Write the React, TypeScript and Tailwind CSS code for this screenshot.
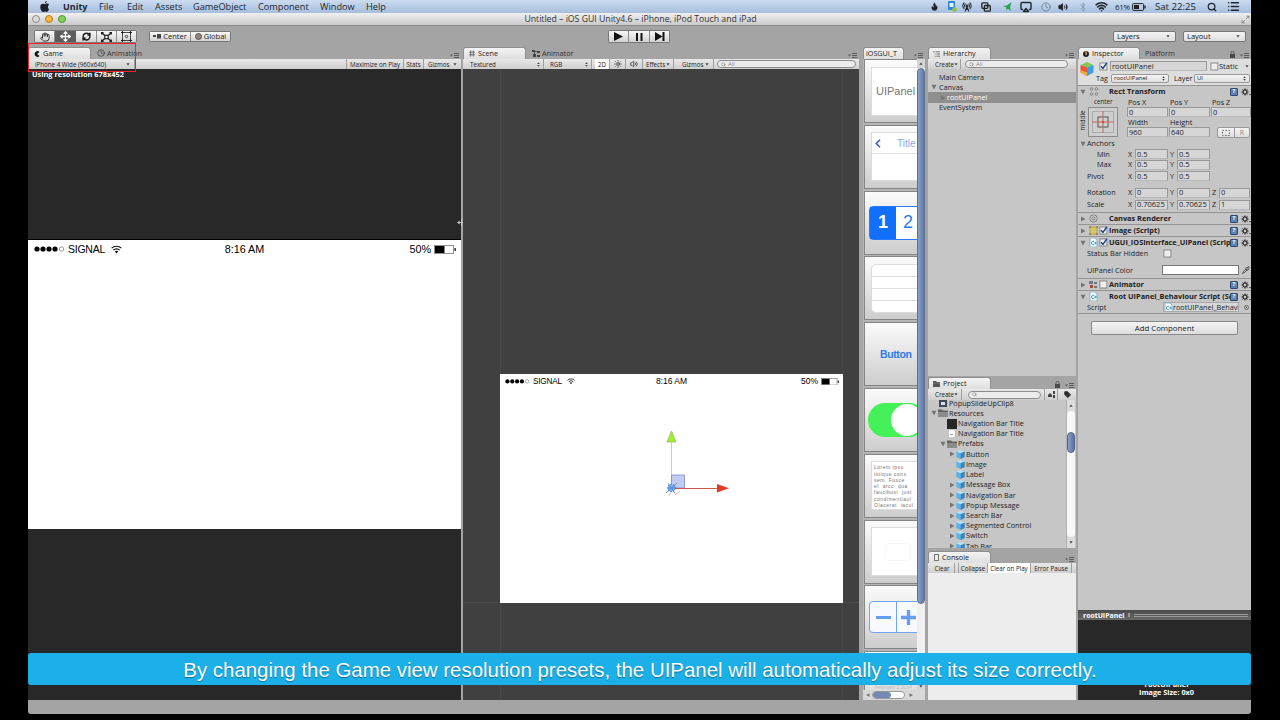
import type { ReactNode } from 'react'
import clsx from 'clsx'
import {
  Airplay,
  Bluetooth,
  Clock,
  Flame,
  Hand,
  List,
  Maximize2,
  Move,
  Pipette,
  RadioTower,
  RefreshCw,
  Search,
  Sun,
  Tag,
  Volume2,
  Wifi,
} from 'lucide-react'

const tabBg = 'bg-linear-to-b from-[#f4f4f4] to-[#dedede]'
const barBg = 'bg-linear-to-b from-[#e8e8e8] to-[#cfcfcf]'

function Tab({ icon, label, className }: { icon?: ReactNode; label: string; className?: string }) {
  return (
    <div className={clsx('flex h-[12px] items-center gap-[3px] rounded-t-[3px] border-x border-t border-[#8f8f8f] whitespace-nowrap', tabBg, className)}>
      {icon}
      <span>{label}</span>
    </div>
  )
}

function PaneMenu({ locked }: { locked?: boolean }) {
  return (
    <div className="mb-[1px] ml-auto flex items-end gap-[5px] pr-[2px]">
      {locked && (
        <svg width="5" height="7" viewBox="0 0 5 7">
          <path d="M0 3h5v4H0z" fill="#4a4a4a" />
          <path d="M1 3.200V1.800a1.500 1.500 0 0 1 3 0v1.400" fill="none" stroke="#4a4a4a" strokeWidth=".8" />
        </svg>
      )}
      <svg width="9" height="5" viewBox="0 0 9 5" fill="#5c5c5c">
        <path d="M0 1.500h3L1.500 3.500zM4 0h5v1H4zM4 2h5v1H4zM4 4h5v1H4z" />
      </svg>
    </div>
  )
}

function Down({ className }: { className?: string }) {
  return (
    <svg width="4" height="3" viewBox="0 0 4 3" className={clsx('shrink-0', className)} fill="#444">
      <path d="M.4.300h3.200L2 2.500z" />
    </svg>
  )
}

function UpDown() {
  return (
    <svg width="3" height="5" viewBox="0 0 4 6" className="shrink-0" fill="#444">
      <path d="M.3 2.300h3.400L2 0zM.3 3.700h3.400L2 6z" />
    </svg>
  )
}

function Fold({ open, className }: { open?: boolean; className?: string }) {
  return (
    <svg width="6" height="6" viewBox="0 0 6 6" className={clsx('shrink-0', className)} fill="#757575">
      <path d={open ? 'M.5.7h5L3 5.500z' : 'M1 .5v5L5.500 3z'} />
    </svg>
  )
}

function SearchBox({ className, hint }: { className?: string; hint?: string }) {
  return (
    <div className={clsx('flex h-[8px] items-center gap-[2px] rounded-full border border-[#8c8c8c] bg-[#ececec] px-[3px] text-[6px] text-[#8a8a8a]', className)}>
      <Search className="size-[5px]" strokeWidth={3} />
      {hint}
    </div>
  )
}

function CubeIcon() {
  return (
    <svg width="9" height="9" viewBox="0 0 9 9" className="shrink-0">
      <path d="M4.500 0 8.700 1.600 4.500 3.200.3 1.600z" fill="#b4e2fa" />
      <path d="M.3 1.600 4.500 3.200V9L.3 7z" fill="#5ab4ea" />
      <path d="M8.700 1.600 4.500 3.200V9l4.200-2z" fill="#2f86c8" />
    </svg>
  )
}

function FolderIcon() {
  return (
    <svg width="10" height="8" viewBox="0 0 10 8" className="shrink-0">
      <path d="M0 .5h4l1 1h5V8H0z" fill="#626262" />
      <path d="M0 3h10v5H0z" fill="#8b8b8b" />
    </svg>
  )
}

function ScriptIcon() {
  return (
    <svg width="9" height="9" viewBox="0 0 9 9" className="shrink-0">
      <path d="M1 0h5l2 2v7H1z" fill="#f4f9fc" stroke="#6ba3c2" strokeWidth=".7" />
      <path d="M5 3.500a1.700 1.700 0 1 0 0 3M5.500 4.300h2M5.500 5.700h2" fill="none" stroke="#3193c4" />
    </svg>
  )
}

function Check({ on }: { on?: boolean }) {
  return (
    <svg width="9" height="9" viewBox="0 0 9 9" className="shrink-0">
      <rect x=".9" y="1" width="7" height="7" fill="#eee" stroke="#777" strokeWidth=".8" />
      {on && <path d="M2 4.200 4 6.400 7.800.8" fill="none" stroke="#1c3f86" strokeWidth="1.500" />}
    </svg>
  )
}

/* ---------- mac menu bar and window toolbar ---------- */

const menus = [
  { label: 'File', width: 'w-[28px]' },
  { label: 'Edit', width: 'w-[28px]' },
  { label: 'Assets', width: 'w-[38px]' },
  { label: 'GameObject', width: 'w-[65px]' },
  { label: 'Component', width: 'w-[62px]' },
  { label: 'Window', width: 'w-[46px]' },
  { label: 'Help', width: 'w-[24px]' },
]

function MenuBar() {
  return (
    <div className="flex h-[13px] items-center bg-linear-to-b from-[#ccdcf0] to-[#a6bedd] text-[9.200px] leading-[12px] text-[#20262e]">
      <svg width="10" height="11" viewBox="0 0 10 11" className="ml-[12px]" fill="#1d2229">
        <path d="M6.800 0c.1 1.200-.9 2.200-2 2.200C4.700 1.100 5.700.2 6.800 0zM9 8.200C8.300 9.800 7.500 11 6.600 11c-.7 0-.9-.4-1.700-.4s-1 .4-1.600.4C2 11 .3 8.200.3 5.900c0-2 1.300-3.200 2.600-3.200.8 0 1.500.5 2 .5s1.300-.6 2.300-.6c.8 0 1.500.4 1.900 1.100C7.400 4.700 7.600 7.300 9 8.200z" />
      </svg>
      <span className="ml-[13px] w-[36px] text-[9px] font-bold">Unity</span>
      {menus.map((m) => (
        <span key={m.label} className={clsx('shrink-0 whitespace-nowrap', m.width)}>
          {m.label}
        </span>
      ))}
      <div className="mr-[11px] ml-auto flex items-center">
        <Flame className="mr-[8px] size-[9px]" fill="#222" />
        <svg width="10" height="11" viewBox="0 0 10 11" className="mr-[5px]">
          <rect x="1" y="0" width="7" height="9" rx="1" fill="#2d86d9" />
          <rect x="2.500" y="2" width="4" height="4" fill="#e8f2fb" />
          <circle cx="7.500" cy="8.500" r="2.300" fill="#8cc63f" />
        </svg>
        <RadioTower className="mr-[9px] size-[10px]" strokeWidth={2.500} />
        <svg width="10" height="10" viewBox="0 0 10 10" className="mr-[12px]" fill="none" stroke="#222" strokeWidth="1.300">
          <rect x=".8" y=".8" width="6" height="5.500" rx="1" />
          <rect x="3.300" y="3.500" width="6" height="5.700" rx="1" />
        </svg>
        <svg width="9" height="10" viewBox="0 0 9 10" className="mr-[8px]">
          <path d="M8.500 0 7 5.500 8 9 5.500 7 3 8l.5-2.500L0 4l4-.5z" fill="#2aa152" />
        </svg>
        <Airplay className="mr-[9px] size-[12px]" strokeWidth={2.800} />
        <Clock className="mr-[7px] size-[10px] text-[#6d7989]" strokeWidth={2} />
        <Volume2 className="mr-[10px] size-[10px]" fill="#222" />
        <Bluetooth className="mr-[7px] size-[10px] text-[#8896a9]" />
        <Wifi className="mr-[7px] size-[13px]" strokeWidth={3} />
        <span className="w-[17px] text-[8px] tracking-[-0.300px]">61%</span>
        <svg width="14" height="8" viewBox="0 0 14 8" className="mr-[9px]">
          <rect x=".6" y=".6" width="11" height="6.800" rx="1" fill="none" stroke="#222" />
          <path d="M2 2h5v4H2zM12.300 2.500h1.300v3h-1.300z" fill="#222" />
        </svg>
        <span className="mr-[11px] w-[41px] text-[9.600px] whitespace-nowrap">Sat 22:25</span>
        <Search className="mr-[10px] size-[10px]" strokeWidth={3} />
        <List className="size-[13px]" strokeWidth={3} />
      </div>
    </div>
  )
}

function TitleBar() {
  return (
    <div className="flex h-[13px] items-center border-b border-[#8b8b8b] bg-linear-to-b from-[#f0f0f0] to-[#cacaca] pr-[1px] pl-[4px]">
      <div className="flex w-[60px] gap-[5px]">
        <div className="size-[8px] rounded-full border border-[#8d8d8d] bg-[#dadada]" />
        <div className="size-[8px] rounded-full border border-[#b07b2a] bg-[#f5b83d]" />
        <div className="size-[8px] rounded-full border border-[#4f9436] bg-[#82d059]" />
      </div>
      <span className="flex-1 pt-[1px] text-center text-[8.700px] text-[#333]">Untitled – iOS GUI Unity4.6 – iPhone, iPod Touch and iPad</span>
      <div className="flex w-[61px] justify-end">
        <Maximize2 className="size-[9px] text-[#777]" />
      </div>
    </div>
  )
}

const btn = 'flex items-center justify-center border-r border-[#8b8b8b] bg-linear-to-b from-[#f8f8f8] to-[#d2d2d2] last:border-r-0'

function Toolbar() {
  return (
    <div className="flex h-[21px] items-start bg-[#a4a4a4] pt-[4px] pl-[6px]">
      <div className="flex h-[13px] w-[103px] rounded-[2px] border border-[#777]">
        <div className={clsx(btn, 'w-[20px]')}>
          <Hand className="size-[10px]" />
        </div>
        <div className="flex w-[21px] items-center justify-center bg-[#5c5c5c] text-white">
          <Move className="size-[11px]" strokeWidth={3} />
        </div>
        <div className={clsx(btn, 'w-[21px]')}>
          <RefreshCw className="size-[9px]" strokeWidth={4} />
        </div>
        <div className={clsx(btn, 'w-[20px]')}>
          <svg width="11" height="10" viewBox="0 0 11 10" stroke="#222" fill="none" strokeWidth="1.200">
            <path d="M.6 2.500V.6h2M8.400.6h2v1.900M.6 7.500v1.900h2M8.400 9.400h2V7.500M1 1l9 8M10 1 1 9" />
            <rect x="3.800" y="3.300" width="3.400" height="3.400" fill="#eee" />
          </svg>
        </div>
        <div className={clsx(btn, 'flex-1')}>
          <svg width="11" height="11" viewBox="0 0 11 11" stroke="#222" fill="none">
            <rect x="1.500" y="1.500" width="8" height="8" strokeWidth=".8" />
            <circle cx="5.500" cy="5.500" r="1.200" strokeWidth=".8" />
            <path d="M0 1.500h3M1.500 0v3M8 1.500h3M9.500 0v3M0 9.500h3M1.500 8v3M8 9.500h3M9.500 8v3" />
          </svg>
        </div>
      </div>
      <div className="mt-[1px] ml-[12px] flex h-[11px] w-[82px] rounded-[2px] border border-[#777] text-[7.500px] leading-[9px]">
        <div className={clsx(btn, 'w-[41px] gap-[2px]')}>
          <svg width="8" height="5" viewBox="0 0 8 5" fill="#444">
            <path d="M0 1h3v2H0zM4 0h4v4.500H4z" />
          </svg>
          Center
        </div>
        <div className={clsx(btn, 'flex-1 gap-[2px]')}>
          <div className="size-[7px] rounded-full border border-[#555] bg-[#97807d]" />
          Global
        </div>
      </div>
      <div className="ml-[377px] flex h-[13px] w-[62px] rounded-[2px] border border-[#777]">
        <div className={clsx(btn, 'w-[20px]')}>
          <svg width="9" height="9" viewBox="0 0 9 9"><path d="M0 0v9l9-4.500z" fill="#111" /></svg>
        </div>
        <div className={clsx(btn, 'w-[21px]')}>
          <svg width="7" height="8" viewBox="0 0 7 8"><path d="M0 0h2v8H0zM4.500 0h2v8h-2z" fill="#111" /></svg>
        </div>
        <div className={clsx(btn, 'flex-1')}>
          <svg width="10" height="9" viewBox="0 0 10 9"><path d="M0 0v9l7.500-4.500zM7.500 0h2v9h-2z" fill="#111" /></svg>
        </div>
      </div>
      <div className="mt-[1px] mr-[5px] ml-auto flex gap-[7px] text-[7.500px]">
        {['Layers', 'Layout'].map((label) => (
          <div key={label} className={clsx('flex h-[11px] w-[63px] items-center justify-between rounded-[2px] border border-[#777] pr-[5px] pl-[3px]', tabBg)}>
            {label}
            <Down />
          </div>
        ))}
      </div>
    </div>
  )
}

/* ---------- game and scene ---------- */

function PhoneStatus({ small }: { small?: boolean }) {
  return (
    <div
      className={clsx(
        "grid grid-cols-3 items-center font-['Liberation_Sans',sans-serif] text-black",
        small ? 'h-[15px] pr-[4px] pl-[5px] text-[8.500px]' : 'h-[18px] pr-[5px] pl-[6px] text-[10.800px]',
      )}
    >
      <div className="flex items-center gap-[3px]">
        <svg width={small ? 25 : 31} viewBox="0 0 31 6">
          {[3, 9, 15, 21].map((cx) => (
            <circle key={cx} cx={cx} cy="3" r="2.600" />
          ))}
          <circle cx="27.500" cy="3" r="2.200" fill="none" stroke="#555" strokeWidth=".6" />
        </svg>
        <span className={small ? 'w-[29px] text-[8.200px] tracking-[-0.200px]' : 'w-[38px] text-[10.500px] tracking-[-0.250px]'}>SIGNAL</span>
        <svg width={small ? 8 : 11} viewBox="0 0 11 9" fill="none" stroke="#111" strokeWidth="1.100" className="ml-[2px]">
          <path d="M.6 3.200a7 7 0 0 1 9.800 0M2.300 5.200a4.500 4.500 0 0 1 6.400 0" />
          <path d="M3.800 6.600a2.600 2.600 0 0 1 3.400 0L5.500 8.500z" fill="#111" stroke="none" />
        </svg>
      </div>
      <span className="pr-[1px] text-center">8:16 AM</span>
      <div className="flex items-center justify-end gap-[3px]">
        50%
        <svg width={small ? 18 : 22} viewBox="0 0 22 9">
          <rect x=".4" y=".4" width="19.200" height="8.200" fill="#fff" stroke="#777" strokeWidth=".8" />
          <path d="M1 1h9.500v7H1zM20.500 3h1.200v3h-1.200z" fill="#000" />
        </svg>
      </div>
    </div>
  )
}

const cell = 'flex h-full items-center border-r border-[#a0a0a0]'

function GamePane() {
  return (
    <section className="flex w-[433px] flex-col">
      <div className="flex h-[12px] items-end">
        <Tab
          className="w-[63px] pl-[5px]"
          label="Game"
          icon={<svg width="6" height="6" viewBox="0 0 6 6"><path d="M5.500 1A2.800 2.800 0 1 0 5.500 5L3 3z" fill="#111" /></svg>}
        />
        <div className="flex h-[12px] items-center gap-[2px] pl-[6px] text-[#333]">
          <Clock className="size-[8px]" />
          Animation
        </div>
        <PaneMenu />
      </div>
      <div className={clsx('flex h-[10px] items-center text-[6.200px]', barBg)}>
        <div className={clsx(cell, 'w-[107px] justify-between pr-[4px] pl-[7px]')}>
          iPhone 4 Wide (960x640)
          <Down />
        </div>
        <div className="flex-1" />
        <div className={clsx(cell, 'w-[58px] justify-center border-l')}>Maximize on Play</div>
        <div className={clsx(cell, 'w-[20px] justify-center')}>Stats</div>
        <div className="flex w-[37px] items-center justify-between px-[4px]">
          Gizmos
          <Down />
        </div>
      </div>
      <div className="h-[171px] overflow-hidden border-b border-black bg-[#282828] pt-[1px] pl-[4px] text-[7.400px] leading-[9px] font-bold text-white">
        Using resolution 678x452
      </div>
      <div className="h-[289px] bg-white">
        <PhoneStatus />
      </div>
      <div className="flex-1 bg-[#282828]" />
    </section>
  )
}

function MoveGizmo() {
  return (
    <svg width="64" height="67" viewBox="0 0 64 67">
      <path d="M5.500 57V10" stroke="#b5e588" />
      <path d="M5.500 0 10 11H1z" fill="#a4ea3a" stroke="#7fb92e" strokeWidth=".6" />
      <rect x="5.500" y="44" width="13" height="13" fill="#c3cbf3" stroke="#7d8bd8" strokeWidth=".8" />
      <path d="M5.500 57.500h47" stroke="#c85a50" />
      <path d="M63 57.300 51 53v8.600z" fill="#e33a25" />
      <circle cx="5.500" cy="57" r="3.500" fill="#8abdf0" stroke="#3a7ac8" strokeWidth="1.200" strokeDasharray="1.500 1" />
      <path d="M0 62 11 52M2 52l7 10M1 57h9" stroke="#3a7ac8" strokeWidth=".7" />
      <path d="m9 64 5-4M3 65l2-4" stroke="#e39a93" strokeWidth=".7" />
    </svg>
  )
}

function ScenePane() {
  return (
    <section className="flex w-[396px] flex-col">
      <div className="flex h-[12px] items-end">
        <Tab
          className="w-[63px] pl-[5px]"
          label="Scene"
          icon={<svg width="6" height="7" viewBox="0 0 7 7"><path d="M2 0v7M5 0v7M0 2h7M0 5h7" stroke="#444" strokeWidth=".8" /></svg>}
        />
        <div className="flex h-[12px] items-center gap-[2px] pl-[6px] text-[#333]">
          <svg width="8" height="7" viewBox="0 0 8 7" fill="#444"><path d="M0 0h3v2H0zM5 1h3v2H5zM1 4h3v3H1zM5 5h3v2H5zM3 1h2v.7H3zM2 2h.8v2H2z" /></svg>
          Animator
        </div>
        <PaneMenu />
      </div>
      <div className={clsx('flex h-[10px] items-center text-[6.200px]', barBg)}>
        <div className={clsx(cell, 'w-[81px] justify-between pr-[3px] pl-[7px]')}>Textured<UpDown /></div>
        <div className={clsx(cell, 'ml-[3px] w-[45px] justify-between pr-[3px] pl-[3px]')}>RGB<UpDown /></div>
        <div className={clsx(cell, 'ml-[3px] w-[15px] justify-center bg-white')}>2D</div>
        <div className={clsx(cell, 'w-[16px] justify-center')}><Sun className="size-[8px]" /></div>
        <div className={clsx(cell, 'w-[17px] justify-center')}><Volume2 className="size-[8px]" /></div>
        <div className={clsx(cell, 'w-[31px] justify-between px-[3px]')}>Effects<Down /></div>
        <div className={clsx(cell, 'ml-[4px] w-[36px] justify-between px-[4px]')}>Gizmos<Down /></div>
        <SearchBox className="ml-[3px] w-[139px]" hint="All" />
      </div>
      <div className="relative flex-1 bg-[#404040]">
        {/* grid lines of the 2D view */}
        <div className="absolute top-0 bottom-0 left-[37px] w-px bg-[#484848]" />
        <div className="absolute top-[533px] right-0 left-0 h-px bg-[#4b4b4b]" />
        <div className="absolute top-0 bottom-0 left-[379px] w-px bg-[#464646]" />
        <div className="absolute top-[305px] left-[37px] h-[229px] w-[343px] bg-white">
          <PhoneStatus small />
          <div className="absolute top-[57px] left-[166px]">
            <MoveGizmo />
          </div>
        </div>
      </div>
    </section>
  )
}

/* ---------- iOS widget palette ---------- */

function Tile({ children }: { children?: ReactNode }) {
  return (
    <div className="mb-[1.800px] flex h-[64px] shrink-0 items-center overflow-hidden border border-r-0 border-[#858585] bg-linear-to-b from-[#fbfbfb] to-[#cdcdcd] font-['Liberation_Sans',sans-serif]">
      {children}
    </div>
  )
}

const card = 'ml-[6px] h-[49px] w-[60px] shrink-0 border border-[#dcdcdc] bg-white'
const lorem = ['Lorem ipsu', 'istique cons', 'sem. Fusce', 'el  arcc  qua', 'faucibusi  just', 'condimentiaul', 'Olacerat  iacul']

function Palette() {
  return (
    <section className="flex w-[62px] flex-col">
      <div className="flex h-[12px] items-end">
        <Tab className="w-[41px] pl-[2px] text-[7.200px]" label="iOSGUI_T" />
        <PaneMenu />
      </div>
      <div className="flex h-[631px] bg-[#b5b5b5] pl-[1px]">
        <div className="flex w-[53px] flex-col overflow-hidden">
          <Tile>
            <div className={clsx(card, 'flex items-center pl-[4px] text-[11px] whitespace-nowrap text-[#777]')}>UIPanel</div>
          </Tile>
          <Tile>
            <div className={card}>
              <div className="flex h-[21px] items-center border-b border-[#e2e2e2] pl-[3px] text-[10px] text-[#8fa9e6]">
                <svg width="6" height="9" viewBox="0 0 6 9"><path d="M5 .8 1.300 4.500 5 8.200" fill="none" stroke="#2e5fd0" strokeWidth="1.600" /></svg>
                <span className="ml-[16px]">Title</span>
              </div>
            </div>
          </Tile>
          <Tile>
            <div className="ml-[4px] flex h-[34px] w-[60px] shrink-0 items-center rounded-[4px] border border-[#2b7af5] bg-white text-[18px] text-[#2b7af5]">
              <div className="flex h-full w-[26px] items-center justify-center bg-[#1170fb] font-bold text-white">1</div>
              <span className="ml-[7px]">2</span>
            </div>
          </Tile>
          <Tile>
            <div className={clsx(card, 'flex flex-col rounded-[5px] pt-[11px]')}>
              <div className="h-[13px] border-y border-[#dedede]" />
              <div className="h-[12px] border-b border-[#dedede]" />
            </div>
          </Tile>
          <Tile>
            <span className="ml-[15px] text-[10.500px] font-bold tracking-[-0.400px] text-[#2f7bea]">Button</span>
          </Tile>
          <Tile>
            <div className="ml-[3px] flex h-[34px] w-[58px] shrink-0 items-center justify-end rounded-full bg-[#43f158] pr-[3px]">
              <div className="size-[32px] rounded-full bg-white" />
            </div>
          </Tile>
          <Tile>
            <div className={clsx(card, 'pt-[2px] pl-[2px] text-[5px] leading-[6.300px] tracking-[0.500px] whitespace-pre text-[#777]')}>
              {lorem.map((l) => (
                <div key={l}>{l}</div>
              ))}
            </div>
          </Tile>
          <Tile>
            <div className={clsx(card, 'flex items-center pl-[13px]')}>
              <div className="h-[18px] w-[26px] rounded-[4px] border border-[#f5f5f5]" />
            </div>
          </Tile>
          <Tile>
            <div className="ml-[4px] flex h-[32px] w-[60px] shrink-0 items-center rounded-[4px] border border-[#6ea4f4] bg-[#f8f9fc]">
              <div className="flex h-full w-[27px] items-center justify-center border-r border-[#6ea4f4]">
                <div className="h-[3px] w-[15px] bg-[#659df1]" />
              </div>
              <svg width="15" height="15" viewBox="0 0 16 16" className="ml-[4px]"><path d="M8 0v16M0 8h16" stroke="#659df1" strokeWidth="3.500" /></svg>
            </div>
          </Tile>
          <Tile>
            <span className="mt-[8px] ml-[10px] text-[5px] whitespace-nowrap text-[#bbb]">February  2  2014</span>
          </Tile>
        </div>
        <div className="flex w-[8px] flex-col items-center bg-[#f0f0f0]">
          <div className="flex h-[9px] w-full items-center justify-center bg-[#d5d5d5]">
            <Down className="rotate-180" />
          </div>
          <div className="h-[536px] w-full rounded-full border border-[#5c6f95] bg-linear-to-r from-[#8ba1c8] to-[#62789f]" />
          <div className="mt-auto flex h-[7px] w-full items-center justify-center bg-[#d5d5d5]">
            <Down />
          </div>
        </div>
      </div>
      <div className="flex h-[10px] items-center bg-[#d8d8d8] pl-[2px]">
        <Fold className="rotate-180 scale-75" />
        <div className="mx-[1px] h-[8px] w-[33px] rounded-full border border-[#999] bg-white">
          <div className="h-[6px] w-[18px] rounded-full bg-[#7389b3]" />
        </div>
        <Fold className="ml-[2px] scale-75" />
      </div>
    </section>
  )
}

/* ---------- hierarchy, project, console ---------- */

const prefabs = [
  { name: 'Button', fold: true },
  { name: 'Image', fold: false },
  { name: 'Label', fold: false },
  { name: 'Message Box', fold: true },
  { name: 'Navigation Bar', fold: true },
  { name: 'Popup Message', fold: true },
  { name: 'Search Bar', fold: true },
  { name: 'Segmented Control', fold: true },
  { name: 'Switch', fold: true },
  { name: 'Tab Bar', fold: true },
]

const row = 'flex h-[10.230px] shrink-0 items-center whitespace-nowrap'

function Hierarchy() {
  return (
    <section className="flex h-[329px] flex-col">
      <div className="flex h-[12px] items-end">
        <Tab
          className="w-[63px] pl-[4px]"
          label="Hierarchy"
          icon={<svg width="7" height="6" viewBox="0 0 8 6"><path d="M0 .5h2M3 .5h5M2 3h1M4 3h4M2 5.500h1M4 5.500h4" stroke="#444" strokeWidth=".8" /></svg>}
        />
        <PaneMenu />
      </div>
      <div className={clsx('flex h-[10px] items-center text-[6.200px]', barBg)}>
        <div className={clsx(cell, 'w-[33px] justify-between pr-[2px] pl-[7px]')}>Create<Down /></div>
        <SearchBox className="ml-[4px] w-[103px]" hint="All" />
      </div>
      <div className="flex flex-1 flex-col bg-[#c6c6c6] pt-[3px]">
        <div className={clsx(row, 'pl-[11px]')}>Main Camera</div>
        <div className={clsx(row, 'gap-[2px] pl-[3px]')}><Fold open />Canvas</div>
        <div className={clsx(row, 'gap-[1px] bg-[#8f8f8f] pl-[12px] text-white')}><Fold />rootUIPanel</div>
        <div className={clsx(row, 'pl-[11px]')}>EventSystem</div>
      </div>
    </section>
  )
}

function Project() {
  return (
    <section className="flex h-[171px] flex-col">
      <div className="flex h-[12px] items-end">
        <Tab
          className="w-[63px] pl-[4px]"
          label="Project"
          icon={<svg width="7" height="6" viewBox="0 0 7 6"><path d="M0 0h3l1 1h3v5H0z" fill="#555" /><path d="M0 2h7" stroke="#999" strokeWidth=".6" /></svg>}
        />
        <PaneMenu locked />
      </div>
      <div className={clsx('flex h-[11px] items-center text-[6.200px]', barBg)}>
        <div className={clsx(cell, 'w-[34px] justify-between pr-[3px] pl-[7px]')}>Create<Down /></div>
        <SearchBox className="ml-[6px] w-[73px]" />
        <div className="ml-[3px] flex h-full w-[14px] items-center justify-center border-x border-[#a0a0a0]">
          <svg width="7" height="7" viewBox="0 0 7 7" fill="#444"><path d="M5 0h2v3H5zM0 4l2-2 2 2v2H0zM5 4h2v3H5z" /></svg>
        </div>
        <div className="flex flex-1 items-center justify-center">
          <Tag className="size-[7px]" fill="#333" />
        </div>
      </div>
      <div className="flex flex-1 overflow-hidden bg-[#c6c6c6]">
        <div className="flex h-[148px] flex-1 flex-col overflow-hidden">
          <div className={clsx(row, '-mt-[2px] gap-[2px] pl-[11px]')}>
            <div className="h-[7px] w-[8px] border-2 border-[#3f4b50] bg-[#dde]" />
            PopupSlideUpClip8
          </div>
          <div className={clsx(row, 'gap-[1px] pl-[3px]')}><Fold open /><FolderIcon />Resources</div>
          <div className={clsx(row, 'gap-[1px] pl-[19px]')}><div className="size-[10px] bg-[#262626]" />Navigation Bar Title</div>
          <div className={clsx(row, 'gap-[2px] pl-[20px]')}>
            <svg width="8" height="9" viewBox="0 0 8 9"><path d="M.3.3h5l2.300 2v6.400H.3z" fill="#fff" stroke="#999" strokeWidth=".6" /><path d="M2 5.500h3" stroke="#999" /></svg>
            Navigation Bar Title
          </div>
          <div className={clsx(row, 'gap-[1px] pl-[12px]')}><Fold open /><FolderIcon />Prefabs</div>
          {prefabs.map((p) => (
            <div key={p.name} className={clsx(row, 'gap-[1px] pl-[21px]')}>
              <Fold className={p.fold ? undefined : 'invisible'} />
              <CubeIcon />
              {p.name}
            </div>
          ))}
        </div>
        <div className="flex w-[9px] flex-col items-center border-l border-[#b0b0b0] bg-[#dcdcdc] pt-[4px]">
          <Down className="rotate-180" />
          <div className="mt-[4px] h-[126px] w-full rounded-full bg-[#f8f8f8] pt-[21px]">
            <div className="h-[21px] rounded-full border border-[#4f648f] bg-linear-to-r from-[#8ba1c8] to-[#5c729c]" />
          </div>
          <Down className="mt-[4px]" />
        </div>
        <div className="w-[1px]" />
      </div>
    </section>
  )
}

function Console() {
  return (
    <section className="mt-[3px] flex flex-1 flex-col">
      <div className="flex h-[12px] items-end">
        <Tab className="w-[63px] pl-[5px]" label="Console" icon={<div className="h-[7px] w-[5px] border border-[#777] bg-[#eee]" />} />
        <PaneMenu />
      </div>
      <div className={clsx('flex h-[10px] items-center text-[6.200px] whitespace-nowrap', barBg)}>
        <div className={clsx(cell, 'w-[27px] justify-center pl-[2px]')}>Clear</div>
        <div className={clsx(cell, 'ml-[3px] w-[30px] justify-center border-l')}>Collapse</div>
        <div className={clsx(cell, 'w-[43px] justify-center bg-white')}>Clear on Play</div>
        <div className={clsx(cell, 'w-[41px] justify-center')}>Error Pause</div>
      </div>
      <div className="flex-1 bg-[#ededed]" />
    </section>
  )
}

/* ---------- inspector ---------- */

function Field({ value, className }: { value: string; className: string }) {
  return (
    <div className={clsx('flex h-[10px] items-center overflow-hidden border border-[#999] border-b-[#b8b8b8] bg-[#d6d6d6] pl-[1px] text-[7.500px]', className)}>
      {value}
    </div>
  )
}

function AxisRow({ label, values, className }: { label: string; values: string[]; className?: string }) {
  return (
    <div className={clsx('flex items-center', className)}>
      <span className="w-[41px] shrink-0">{label}</span>
      {values.map((v, i) => (
        <div key={i} className="flex w-[42px] shrink-0 items-center">
          <span className="w-[7px]">{'XYZ'[i]}</span>
          <Field value={v} className={i === 2 ? 'w-[31px]' : 'w-[33px]'} />
        </div>
      ))}
    </div>
  )
}

function HelpGear() {
  return (
    <div className="ml-auto flex shrink-0 items-center gap-[3px]">
      <div className="flex size-[8px] items-center justify-center rounded-[1px] border border-[#30486f] bg-[#5c82b6] text-[6px] font-bold text-white">?</div>
      <svg width="10" height="8" viewBox="0 0 10 8">
        <circle cx="4" cy="4" r="2" fill="none" stroke="#333" strokeWidth="1.300" />
        <path d="M4 .3v7.400M.3 4h7.400M1.400 1.400l5.200 5.200M6.600 1.400 1.400 6.600" stroke="#333" strokeWidth=".9" />
        <circle cx="4" cy="4" r="1.200" fill="#d0d0d0" />
        <path d="M8 6h2L9 7.500z" fill="#333" />
      </svg>
    </div>
  )
}

function ComponentHead({ open, icon, check, title, className }: { open?: boolean; icon: ReactNode; check?: ReactNode; title: string; className?: string }) {
  return (
    <div className={clsx('flex h-[12px] shrink-0 items-center border-t border-[#949494] pl-[2px] text-[7.350px] font-bold', className)}>
      <Fold open={open} />
      <div className="ml-[2px] flex w-[11px] justify-center">{icon}</div>
      <div className="flex w-[10px]">{check}</div>
      <span className="min-w-0 flex-1 overflow-hidden whitespace-nowrap">{title}</span>
      <HelpGear />
    </div>
  )
}

function Inspector() {
  return (
    <section className="flex w-[173px] flex-col overflow-hidden bg-[#c6c6c6]">
      <div className="flex h-[12px] items-end bg-[#a4a4a4]">
        <Tab
          className="w-[62px] pl-[4px]"
          label="Inspector"
          icon={<div className="flex size-[6px] items-center justify-center rounded-full bg-[#222] text-[5px] font-bold text-white">i</div>}
        />
        <span className="pb-[1px] pl-[5px] text-[7.400px] text-[#333]">Platform</span>
        <PaneMenu locked />
      </div>
      <div className="flex h-[26px] bg-[#dedede] pt-[1px]">
        <svg width="14" height="14" viewBox="0 0 14 14" className="mt-[2px] ml-[2px]">
          <path d="M7 0 13.500 3 7 5.500.5 3z" fill="#80c957" />
          <path d="M.5 3 7 5.500V14l-6.500-3.500z" fill="#e8573a" />
          <path d="M13.500 3 7 5.500V14l6.500-3.500z" fill="#39a0e8" />
          <path d="M.5 8 7 10.500V14l-6.500-3.500z" fill="#f3a93c" />
        </svg>
        <div className="flex flex-1 flex-col">
          <div className="flex h-[12px] items-center">
            <div className="ml-[5px]"><Check on /></div>
            <Field value="rootUIPanel" className="ml-[2px] w-[97px]" />
            <div className="ml-[3px]"><Check /></div>
            <span className="text-[7.500px]">Static</span>
            <Down className="ml-[7px]" />
          </div>
          <div className="flex h-[12px] items-center">
            <span className="ml-[2px] w-[15px]">Tag</span>
            <div className={clsx('flex h-[9px] w-[58px] items-center justify-between rounded-[2px] border border-[#999] pr-[3px] pl-[2px] text-[6px]', tabBg)}>rootUIPanel<UpDown /></div>
            <span className="ml-[5px] w-[20px]">Layer</span>
            <div className={clsx('flex h-[9px] w-[56px] items-center justify-between rounded-[2px] border border-[#999] pr-[3px] pl-[2px] text-[6px]', tabBg)}>UI<UpDown /></div>
          </div>
        </div>
      </div>
      <ComponentHead
        open
        title="Rect Transform"
        icon={
          <svg width="10" height="9" viewBox="0 0 10 9" fill="none" stroke="#777" strokeWidth=".8">
            <circle cx="2.500" cy="2" r="1.300" /><circle cx="7.500" cy="2" r="1.300" /><circle cx="2.500" cy="7" r="1.300" /><circle cx="7.500" cy="7" r="1.300" />
          </svg>
        }
      />
      <div className="flex h-[41px]">
        <div className="flex w-[10px] items-center justify-center pt-[6px]">
          <span className="-rotate-90 text-[6.200px]">middle</span>
        </div>
        <div className="flex w-[39px] flex-col">
          <span className="h-[10px] pl-[6px] text-[6.200px] leading-[10px]">center</span>
          <div className="h-[30px] w-[30px] border border-[#8c8c8c] bg-[#cecece]">
            <svg width="28" height="28" viewBox="0 0 28 28" fill="none">
              <rect x="3.500" y="3.500" width="21" height="21" stroke="#aaa" />
              <rect x="9" y="9" width="10" height="10" stroke="#555" />
              <path d="M14 3v22M3 14h22" stroke="#c4695a" />
              <circle cx="14" cy="14" r="1.300" fill="#d8502e" />
            </svg>
          </div>
        </div>
        <div className="flex flex-col">
          <div className="flex h-[10px] items-center pl-[1px]">
            <span className="w-[42px]">Pos X</span>
            <span className="w-[42px]">Pos Y</span>
            <span>Pos Z</span>
          </div>
          <div className="flex gap-[1px]">
            {['w-[41px]', 'w-[41px]', 'w-[40px]'].map((w, i) => (
              <Field key={i} value="0" className={w} />
            ))}
          </div>
          <div className="flex h-[10px] items-center pl-[1px]">
            <span className="w-[42px]">Width</span>
            <span>Height</span>
          </div>
          <div className="flex gap-[1px]">
            <Field value="960" className="w-[41px]" />
            <Field value="640" className="w-[41px]" />
            <div className={clsx('ml-[6px] flex h-[11px] w-[33px] items-center rounded-[2px] border border-[#999] text-[7px] text-[#888]', tabBg)}>
              <div className="flex h-full w-[17px] items-center justify-center border-r border-[#999]">
                <svg width="8" height="6" viewBox="0 0 8 6"><rect x=".5" y=".5" width="7" height="5" fill="none" stroke="#666" strokeDasharray="1.500 1.500" /></svg>
              </div>
              <span className="flex-1 text-center">R</span>
            </div>
          </div>
        </div>
      </div>
      <div className="flex h-[11px] items-center gap-[1px] pl-[2px]"><Fold open />Anchors</div>
      <AxisRow className="h-[10px] pl-[9px] [&>span]:pl-[10px]" label="Min" values={['0.5', '0.5']} />
      <AxisRow className="h-[11px] pl-[9px] [&>span]:pl-[10px]" label="Max" values={['0.5', '0.5']} />
      <AxisRow className="h-[12px] pl-[9px]" label="Pivot" values={['0.5', '0.5']} />
      <AxisRow className="mt-[5px] h-[11px] pl-[9px]" label="Rotation" values={['0', '0', '0']} />
      <AxisRow className="h-[13px] pl-[9px]" label="Scale" values={['0.70625', '0.70625', '1']} />
      <ComponentHead
        className="mt-[1px]"
        title="Canvas Renderer"
        icon={<svg width="9" height="9" viewBox="0 0 9 9" fill="none" stroke="#888"><circle cx="4.500" cy="4.500" r="3.700" /><circle cx="4.500" cy="4.500" r="1.500" /></svg>}
      />
      <ComponentHead
        title="Image (Script)"
        check={<Check on />}
        icon={<svg width="9" height="9" viewBox="0 0 9 9"><path d="M1 1h7v7H1z" fill="#d7c66c" stroke="#b09f4c" /><path d="M0 0h2v2H0zM7 0h2v2H7zM0 7h2v2H0zM7 7h2v2H7z" fill="#a08e3a" /></svg>}
      />
      <ComponentHead open title="UGUI_IOSInterface_UIPanel (Script" check={<Check on />} icon={<ScriptIcon />} />
      <div className="flex h-[10px] items-center pl-[9px]">
        <span className="w-[76px]">Status Bar Hidden</span>
        <Check />
      </div>
      <div className="mt-[7px] flex h-[10px] items-center pl-[9px]">
        <span className="w-[75px]">UIPanel Color</span>
        <div className="h-[10px] w-[77px] border border-[#777] bg-white" />
        <Pipette className="ml-[3px] size-[8px]" />
      </div>
      <ComponentHead
        className="mt-[3px]"
        title="Animator"
        check={<Check />}
        icon={<svg width="9" height="8" viewBox="0 0 9 8"><path d="M0 0h4v3H0zM5 1h3v2H5zM5 5h3v2H5z" fill="#6b7c7c" /><path d="M1 4h3v3H1z" fill="#b5443c" /></svg>}
      />
      <ComponentHead open title="Root UIPanel_Behaviour Script (Sc" icon={<ScriptIcon />} />
      <div className="flex h-[10px] items-center pl-[9px]">
        <span className="w-[76px]">Script</span>
        <div className="flex h-[10px] w-[76px] items-center overflow-hidden border border-[#aaa] bg-[#d6d6d6] whitespace-nowrap"><ScriptIcon />rootUIPanel_Behavi</div>
        <div className="ml-[5px] flex size-[5px] items-center justify-center rounded-full border border-[#666]">
          <div className="size-[1px] bg-[#444]" />
        </div>
      </div>
      <div className="mt-[1px] border-t border-[#949494]" />
      <div className={clsx('mx-[13px] mt-[7px] flex h-[14px] items-center justify-center rounded-[2px] border border-[#888] text-[7.800px]', tabBg)}>Add Component</div>
      <div className="mt-auto flex h-[10px] items-center gap-[4px] bg-linear-to-b from-[#4a4a4a] to-[#6a6a6a] pr-[3px] pl-[5px] text-[6.900px] font-bold text-white">
        rootUIPanel
        <span className="h-[4px] w-[2px] bg-[#999]" />
        <div className="h-[3px] flex-1 border-y border-[#999]" />
      </div>
      <div className="flex h-[80px] flex-col items-center justify-end bg-[#282828] pb-[4px] pl-[4px] text-[7.300px] leading-[8px] font-bold text-white">
        <span>rootUIPanel</span>
        <span>Image Size: 0x0</span>
      </div>
    </section>
  )
}

export default function App() {
  return (
    <div className="relative h-[720px] w-[1280px] overflow-hidden bg-black font-['Open_Sans','Noto_Sans',sans-serif] text-[7.250px] leading-[9px] text-[#1c1c1c]">
      <div className="ml-[28px] flex h-[714px] w-[1223px] flex-col overflow-hidden rounded-b-[3px] bg-[#a4a4a4]">
        <MenuBar />
        <TitleBar />
        <Toolbar />
        <main className="flex h-[653px]">
          <GamePane />
          <div className="w-[2px]" />
          <ScenePane />
          <div className="w-[4px]" />
          <Palette />
          <div className="w-[3px]" />
          <div className="flex w-[148px] flex-col">
            <Hierarchy />
            <div className="h-[1px]" />
            <Project />
            <Console />
          </div>
          <div className="w-[2px]" />
          <Inspector />
        </main>
      </div>

      {/* resize cursor on the game/scene splitter */}
      <svg width="6" height="7" viewBox="0 0 6 7" className="absolute top-[219px] left-[457px]" fill="#c8c8c8">
        <path d="M0 3.500 2.500 1.500v1.500H6v1H2.500v1.500zM4 0h1v7H4z" />
      </svg>

      {/* highlight round the resolution dropdown */}
      <div className="absolute top-[43px] left-[28px] h-[29px] w-[108px] border border-[#f0252b]" />

      <div className="absolute top-[653px] left-[28px] flex h-[32px] w-[1223px] items-center justify-center rounded-[3px] bg-[#1bb1e8] pt-[2px] pl-[1px] font-['Liberation_Sans',sans-serif] text-[20.430px] text-white [text-shadow:0_1px_1px_rgba(0,0,0,0.4)]">
        By changing the Game view resolution presets, the UIPanel will automatically adjust its size correctly.
      </div>
    </div>
  )
}
